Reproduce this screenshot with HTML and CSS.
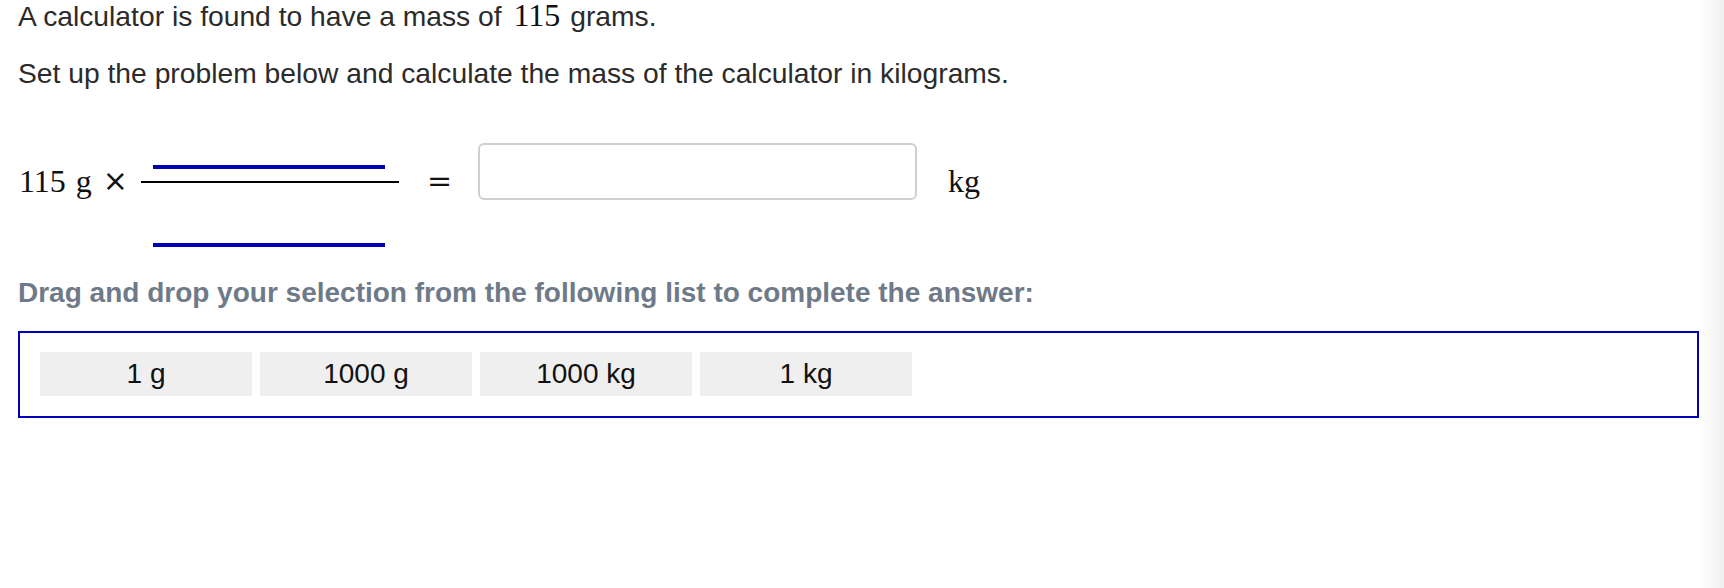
FILE: index.html
```html
<!DOCTYPE html>
<html lang="en">
<head>
<meta charset="utf-8">
<title>Unit conversion</title>
<link rel="stylesheet" href="styles.css">
</head>
<body>
<main class="page">
  <p class="line first">A calculator is found to have a mass of <span class="m">115</span> grams.</p>
  <p class="line second">Set up the problem below and calculate the mass of the calculator in kilograms.</p>

  <div class="equation">
    <span class="mt num">115</span>
    <span class="mt unit">g</span>
    <span class="mt times">×</span>
    <div class="fraction">
      <div class="slot top"></div>
      <div class="bar"></div>
      <div class="slot bottom"></div>
    </div>
    <span class="mt eq">=</span>
    <div class="answer"></div>
    <span class="mt kg">kg</span>
  </div>

  <p class="prompt">Drag and drop your selection from the following list to complete the answer:</p>

  <div class="pool">
    <div class="chip">1 g</div>
    <div class="chip">1000 g</div>
    <div class="chip">1000 kg</div>
    <div class="chip">1 kg</div>
  </div>
</main>
</body>
</html>
```

FILE: styles.css
```css
html, body {
  margin: 0;
  padding: 0;
  background: #ffffff;
}

body {
  font-family: "Liberation Sans", Arial, Helvetica, sans-serif;
  color: #2b2b2b;
  width: 1724px;
  height: 588px;
  overflow: hidden;
}

body::after {
  content: "";
  position: fixed;
  top: 0;
  right: 0;
  width: 24px;
  height: 100%;
  background: linear-gradient(to right, rgba(240,240,240,0), rgba(238,238,238,0.9));
  pointer-events: none;
}

.page {
  padding: 2px 25px 0 18px;
  display: flex;
  flex-direction: column;
}

.line {
  margin: 0;
  font-size: 28.25px;
  line-height: 28px;
}

.second {
  margin-top: 29px;
}

.m {
  font-family: "Liberation Serif", "Times New Roman", serif;
  font-size: 32px;
  line-height: 20px;
  margin: 0 2px 0 4px;
  color: #111;
}

.equation {
  display: flex;
  align-items: center;
  margin-top: 31px;
}

.mt {
  font-family: "Liberation Serif", "Times New Roman", serif;
  font-size: 32px;
  line-height: 32px;
  color: #111;
  margin-bottom: 4px;
}

.num { margin-left: 1px; }
.unit { margin-left: 10px; }

.times {
  font-family: "DejaVu Sans", sans-serif;
  font-size: 30px;
  margin-left: 11px;
}

.fraction {
  display: flex;
  flex-direction: column;
  width: 258px;
  margin-left: 13px;
}

.slot {
  width: 232px;
  margin-left: 12px;
  border-bottom: 4px solid #0000b4;
}

.slot.top {
  height: 47px;
  margin-bottom: 12px;
}

.slot.bottom {
  height: 60px;
}

.bar {
  height: 2px;
  background: #000;
}

.eq {
  font-family: "DejaVu Serif", serif;
  font-size: 30px;
  margin-left: 28px;
}

.answer {
  width: 435px;
  height: 53px;
  margin-left: 26px;
  margin-bottom: 22px;
  border: 2px solid #cfcfcf;
  border-radius: 6px;
  background: #fff;
}

.kg {
  margin-left: 31px;
}

.prompt {
  margin: 32px 0 0 0;
  font-size: 28px;
  line-height: 28px;
  font-weight: bold;
  color: #6f7a89;
}

.pool {
  margin-top: 24px;
  width: 1637px;
  border: 2px solid #0000b4;
  padding: 19px 20px 20px 20px;
  display: flex;
  gap: 8px;
}

.chip {
  width: 212px;
  height: 44px;
  line-height: 44px;
  background: #efefef;
  text-align: center;
  font-size: 28px;
  color: #111;
}
```
